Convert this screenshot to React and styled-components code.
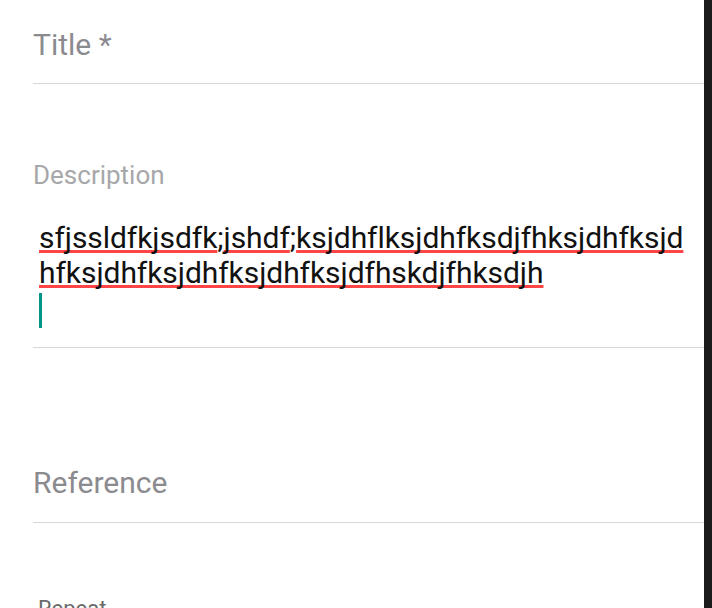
import React from "react";
import styled, { createGlobalStyle } from "styled-components";

const Global = createGlobalStyle`
  html, body { margin: 0; padding: 0; background: #ffffff; }
  body { font-family: Roboto, "Noto Sans", sans-serif; -webkit-font-smoothing: antialiased; }
`;

const Screen = styled.div`
  display: flex;
  width: 712px;
  height: 608px;
  overflow: hidden;
  background: #ffffff;
`;

const Form = styled.div`
  flex: 1;
  display: flex;
  flex-direction: column;
  padding-left: 33px;
`;

const EdgeBar = styled.div`
  width: 8px;
  flex-shrink: 0;
  background: #1b1b1b;
`;

const Field = styled.div`
  display: flex;
  flex-direction: column;
  margin-top: ${(p) => p.$top}px;
  padding-bottom: ${(p) => p.$bottom}px;
  border-bottom: 1px solid #d7d7d7;
`;

const Hint = styled.div`
  font-size: 30px;
  line-height: 36px;
  color: #8b8b8f;
`;

const FloatLabel = styled.div`
  font-size: 26px;
  line-height: 30px;
  color: #a7a7a9;
`;

const Editor = styled.div`
  margin-top: 30px;
  padding-left: 6px;
  font-size: 30px;
  line-height: 35px;
  letter-spacing: -0.06px;
  color: #111111;
`;

const Word = styled.span`
  text-decoration: underline;
  text-decoration-color: #ff4545;
  text-decoration-thickness: 3px;
  text-underline-offset: 2px;
  text-decoration-skip-ink: none;
`;

const Caret = styled.div`
  width: 3px;
  height: 35px;
  margin-top: 3px;
  margin-left: 6px;
  background: #009688;
`;

const SectionLabel = styled.div`
  margin-top: 73px;
  padding-left: 5px;
  font-size: 22px;
  line-height: 26px;
  color: #6a6a6a;
`;

export default function App() {
  return (
    <>
      <Global />
      <Screen>
        <Form>
          <Field $top={27} $bottom={20}>
            <Hint>Title *</Hint>
          </Field>
          <Field $top={76} $bottom={19}>
            <FloatLabel>Description</FloatLabel>
            <Editor>
              <Word>sfjssldfkjsdfk</Word>;<Word>jshdf</Word>;
              <Word>ksjdhflksjdhfksdjfhksjdhfksjd</Word>
              <br />
              <Word>hfksjdhfksjdhfksjdhfksjdfhskdjfhksdjh</Word>
            </Editor>
            <Caret />
          </Field>
          <Field $top={117} $bottom={21}>
            <Hint>Reference</Hint>
          </Field>
          <SectionLabel>Repeat</SectionLabel>
        </Form>
        <EdgeBar />
      </Screen>
    </>
  );
}
